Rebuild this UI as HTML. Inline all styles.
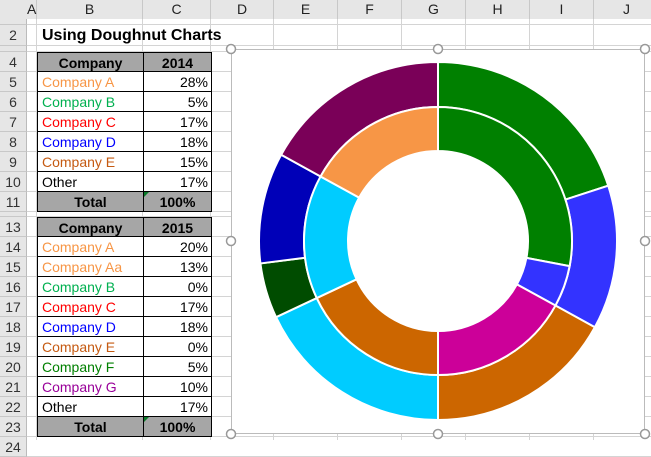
<!DOCTYPE html>
<html><head><style>
body{margin:0;width:651px;height:440px;overflow:hidden;background:#fff;font-family:"Liberation Sans",Arial,sans-serif;position:relative}
.a{position:absolute;box-sizing:border-box}
.hd{background:#e6e6e6;color:#222;font-size:14px;text-align:center;line-height:19px}
.rn{background:#e6e6e6;color:#333;font-size:14px;text-align:center;width:27px;left:0}
.vl{position:absolute;top:19px;bottom:0;width:1px;background:#d4d4d4}
.hl{position:absolute;left:27px;right:0;height:1px;background:#d4d4d4}
.c{position:absolute;font-size:14px;line-height:20px;height:20px;box-sizing:border-box;white-space:nowrap}
</style></head><body>
<div class="a hd" style="left:0;top:0;width:651px;height:19px;border-bottom:1px solid #bbb"></div>
<div class="a" style="left:0;top:0;width:2px;height:440px;background:#217346"></div>
<div id="cols"></div>
<div id="rows"></div>
<div id="tbl"></div>
<div class="c" style="left:42px;top:26px;font-weight:bold;font-size:16px;line-height:20px">Using Doughnut Charts</div>
<div class="a" style="left:231px;top:49px;width:414px;height:385px;background:#fff;border:1px solid #bbb"></div>
<svg class="a" style="left:0;top:0" width="651" height="440" id="ch"></svg>
<script>
var cols=[["A",27,37],["B",37,143],["C",143,211],["D",211,274],["E",274,338],["F",338,402],["G",402,466],["H",466,530],["I",530,594],["J",594,660]];
var h="";cols.forEach(function(c){h+='<div class="a hd" style="left:'+c[1]+'px;top:0;width:'+(c[2]-c[1])+'px;height:19px;border-right:1px solid #c8c8c8">'+c[0]+'</div><div class="vl" style="left:'+(c[2]-1)+'px"></div>';});
h+='<div class="a rn" style="top:0;height:19px"></div>';
document.getElementById('cols').innerHTML=h;
var rows=[[1,19,25],[2,25,46],[3,46,52]];var y=52;for(var r=4;r<=11;r++){rows.push([r,y,y+20]);y+=20;}rows.push([12,y,y+5]);y+=5;for(r=13;r<=23;r++){rows.push([r,y,y+20]);y+=20;}rows.push([24,y,y+20]);
h="";rows.forEach(function(r){var t=(r[2]-r[1]>10)?r[0]:'';h+='<div class="a rn" style="top:'+r[1]+'px;height:'+(r[2]-r[1])+'px;line-height:'+(r[2]-r[1])+'px;border-bottom:1px solid #c8c8c8;border-right:1px solid #bbb">'+t+'</div><div class="hl" style="top:'+(r[2]-1)+'px"></div>';});
document.getElementById('rows').innerHTML=h;
function tb(top,yr,data,tot){var s='';s+='<div class="c" style="left:37px;top:'+top+'px;width:107px;background:#a6a6a6;border:1px solid #000;font-weight:bold;text-align:center">Company</div><div class="c" style="left:143px;top:'+top+'px;width:69px;background:#a6a6a6;border:1px solid #000;font-weight:bold;text-align:center">'+yr+'</div>';
data.forEach(function(d,i){var t=top+20*(i+1);s+='<div class="c" style="left:37px;top:'+t+'px;width:107px;background:#fff;border:1px solid #000;border-top:0;padding-left:4px;color:'+d[2]+'">'+d[0]+'</div><div class="c" style="left:143px;top:'+t+'px;width:69px;background:#fff;border:1px solid #000;border-top:0;text-align:right;padding-right:3px">'+d[1]+'</div>';});
var t=top+20*(data.length+1);s+='<div class="c" style="left:37px;top:'+t+'px;width:107px;background:#a6a6a6;border:1px solid #000;border-top:0;font-weight:bold;text-align:center">Total</div><div class="c" style="left:143px;top:'+t+'px;width:69px;background:#a6a6a6;border:1px solid #000;border-top:0;font-weight:bold;text-align:center">100%</div><div class="a" style="left:144px;top:'+t+'px;width:0;height:0;border-top:5px solid #0a7a2a;border-right:5px solid transparent"></div>';return s;}
var O="#f79646",G="#00b050",R="#ff0000",B="#0000ff",E="#c55a11";
h=tb(52,2014,[["Company A","28%",O],["Company B","5%",G],["Company C","17%",R],["Company D","18%",B],["Company E","15%",E],["Other","17%","#000"]]);
h+=tb(217,2015,[["Company A","20%",O],["Company Aa","13%",O],["Company B","0%",G],["Company C","17%",R],["Company D","18%",B],["Company E","0%",E],["Company F","5%","#008000"],["Company G","10%","#990099"],["Other","17%","#000"]]);
document.getElementById('tbl').innerHTML=h;
var cx=438,cy=241;
function arc(a0,a1,r0,r1,col){function p(a,r){var t=a*2*Math.PI;return (cx+r*Math.sin(t)).toFixed(2)+','+(cy-r*Math.cos(t)).toFixed(2);}var l=(a1-a0)>0.5?1:0;
return '<path d="M'+p(a0,r1)+' A'+r1+','+r1+' 0 '+l+' 1 '+p(a1,r1)+' L'+p(a1,r0)+' A'+r0+','+r0+' 0 '+l+' 0 '+p(a0,r0)+' Z" fill="'+col+'" stroke="#fff" stroke-width="2"/>';}
function ring(vals,cols,r0,r1){var s='',a=0;vals.forEach(function(v,i){if(v>0)s+=arc(a,a+v,r0,r1,cols[i]);a+=v;});return s;}
var s=ring([.20,.13,.17,.18,.05,.10,.17],["#008000","#3333ff","#cc6600","#00ccff","#004c00","#0000b8","#7a0058"],134,179);
s+=ring([.28,.05,.17,.18,.15,.17],["#008000","#3333ff","#cc0099","#cc6600","#00ccff","#f79646"],90,134);
[[231,49],[438,49],[645,49],[231,241],[645,241],[231,434],[438,434],[645,434]].forEach(function(q){s+='<circle cx="'+q[0]+'" cy="'+q[1]+'" r="4.5" fill="#fff" stroke="#999" stroke-width="1.5"/>';});
document.getElementById('ch').innerHTML=s;
</script>
</body></html>
